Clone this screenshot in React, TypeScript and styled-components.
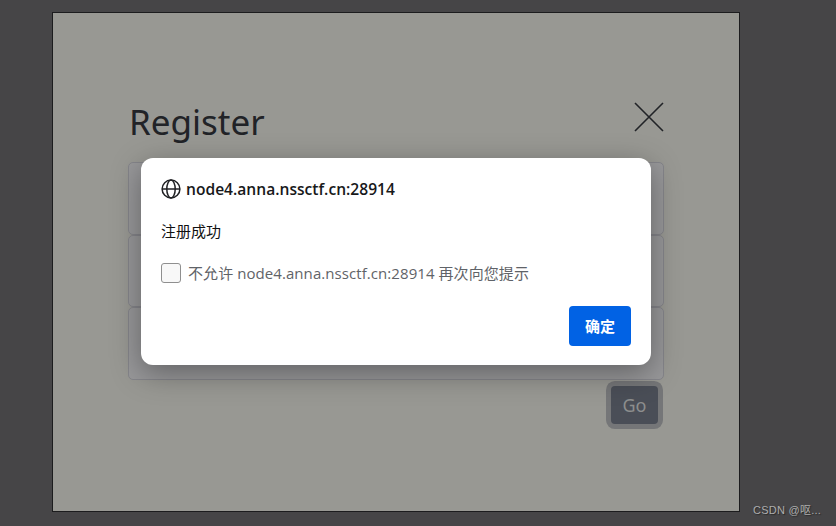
import { createGlobalStyle } from "styled-components";
import styled from "styled-components";

const Global = createGlobalStyle`
  html, body {
    margin: 0;
    padding: 0;
    background: #464547;
  }
  #root {
    width: 836px;
    height: 526px;
    overflow: hidden;
  }
`;

const Page = styled.div`
  position: relative;
  width: 836px;
  height: 526px;
  box-sizing: border-box;
  padding: 12px 96px 14px 52px;
  background: #464547;
  font-family: "Open Sans", "Noto Sans CJK SC", sans-serif;
`;

const Frame = styled.div`
  position: relative;
  box-sizing: border-box;
  height: 500px;
  border: 1px solid #1c1c1e;
  background: #989893;
  padding: 79px 75px 0;
`;

const TitleRow = styled.div`
  display: flex;
  justify-content: space-between;
  align-items: flex-start;
  height: 70px;
`;

const Title = styled.h1`
  margin: 0 0 0 1px;
  font-family: "Noto Sans", sans-serif;
  font-weight: 400;
  font-size: 35px;
  line-height: 60px;
  color: #212327;
`;

const CloseIcon = styled.svg`
  display: block;
  margin: 10px 0 0;
  width: 30px;
  height: 30px;
`;

const Field = styled.div<{ $height: number }>`
  box-sizing: border-box;
  height: ${(p) => p.$height}px;
  border: 1px solid #85858a;
  border-radius: 5px;
  background: #98989a;
`;

const Actions = styled.div`
  display: flex;
  justify-content: flex-end;
  padding: 6px 6px 0 0;
`;

const GoButton = styled.button`
  width: 47px;
  height: 38px;
  padding: 0;
  border: 0;
  border-radius: 4px;
  background: #4a4e57;
  box-shadow: 0 0 0 5px #757678;
  color: #8d8e8e;
  font-family: "Noto Sans", sans-serif;
  font-size: 18px;
`;

const Dialog = styled.div`
  position: absolute;
  left: 88px;
  top: 145px;
  width: 510px;
  height: 207px;
  box-sizing: border-box;
  padding: 20px;
  border-radius: 12px;
  background: #fff;
  box-shadow: 0 8px 30px rgba(0, 0, 0, 0.36);
  display: flex;
  flex-direction: column;
`;

const Origin = styled.div`
  display: flex;
  align-items: center;
  gap: 5px;
  height: 21px;
  font-size: 15.6px;
  font-weight: 600;
  color: #17181a;
`;

const Message = styled.div`
  margin-top: 21px;
  font-size: 15px;
  line-height: 22px;
  color: #111;
`;

const Suppress = styled.label`
  display: flex;
  align-items: center;
  gap: 7px;
  margin-top: 20px;
  font-size: 15px;
  line-height: 22px;
  letter-spacing: 0.07px;
  color: #5f6368;
`;

const Box = styled.span`
  box-sizing: border-box;
  width: 20px;
  height: 20px;
  border: 1px solid #8f8f8f;
  border-radius: 3px;
  background: #f8f8f8;
`;

const Footer = styled.div`
  display: flex;
  justify-content: flex-end;
  margin-top: 22px;
`;

const Confirm = styled.button`
  width: 62px;
  height: 40px;
  padding: 0 0 2px;
  border: 0;
  border-radius: 4px;
  background: #0162e4;
  color: #fff;
  font-family: "Noto Sans CJK SC", sans-serif;
  font-size: 15px;
  font-weight: 700;
`;

const Watermark = styled.div`
  position: absolute;
  left: 753px;
  top: 503px;
  font-family: "Liberation Sans", "Noto Sans CJK SC", sans-serif;
  font-size: 11px;
  line-height: 15px;
  letter-spacing: 0.25px;
  color: #adadad;
  text-shadow: 1px 1px 1px #2a2a2a;
`;

function Globe() {
  return (
    <svg width="20" height="20" viewBox="0 0 20 20" fill="none" stroke="#202124" strokeWidth="1.5">
      <circle cx="10" cy="10" r="8.9" />
      <ellipse cx="10" cy="10" rx="4.2" ry="8.9" />
      <path d="M1.2 10h17.6" />
    </svg>
  );
}

export default function App() {
  return (
    <Page>
      <Global />
      <Frame>
        <TitleRow>
          <Title>Register</Title>
          <CloseIcon viewBox="0 0 30 30" fill="none" stroke="#212327" strokeWidth="1.6">
            <path d="M1 1l28 28M29 1L1 29" />
          </CloseIcon>
        </TitleRow>
        <Field $height={73} />
        <Field $height={72} />
        <Field $height={73} />
        <Actions>
          <GoButton>Go</GoButton>
        </Actions>
        <Dialog>
          <Origin>
            <Globe />
            node4.anna.nssctf.cn:28914
          </Origin>
          <Message>注册成功</Message>
          <Suppress>
            <Box />
            不允许 node4.anna.nssctf.cn:28914 再次向您提示
          </Suppress>
          <Footer>
            <Confirm>确定</Confirm>
          </Footer>
        </Dialog>
      </Frame>
      <Watermark>CSDN @呕...</Watermark>
    </Page>
  );
}
